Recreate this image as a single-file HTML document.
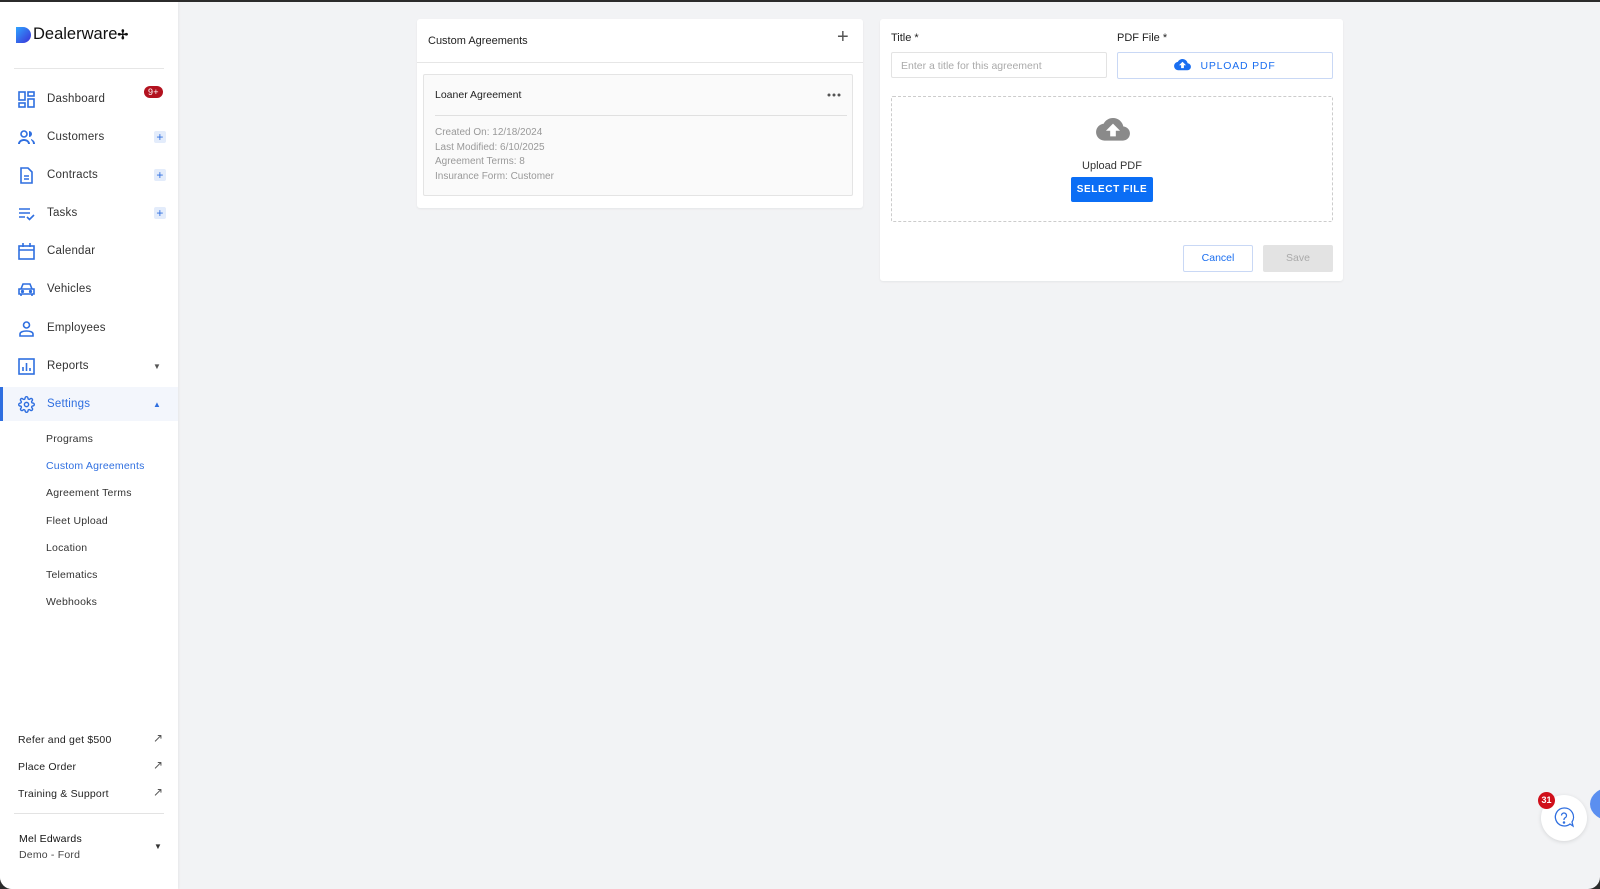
<!DOCTYPE html>
<html><head><meta charset="utf-8"><style>
*{box-sizing:border-box;margin:0;padding:0}
body{width:1600px;height:889px;overflow:hidden;background:#2b2b2b;font-family:"Liberation Sans",sans-serif;position:relative}
#app{position:absolute;left:0;top:2px;width:1600px;height:887px;background:#f2f3f5;border-radius:0 0 12px 12px;overflow:hidden}
.sb{position:absolute;left:0;top:0;width:178px;height:887px;background:#fff;box-shadow:1px 0 2px rgba(0,0,0,.05)}
.a{position:absolute}
.nav{position:absolute;left:0;width:178px;height:34px;display:flex;align-items:center;font-size:11.5px;color:#333;letter-spacing:.2px}
.nav .ic{position:absolute;left:18px;top:9px;width:17px;height:17px}
.nav .t{position:absolute;left:47px}
.plus{position:absolute;left:154px;top:11px;width:12px;height:12px;background:#e3ecfb;border-radius:2px;color:#2f6fe0;font-size:12px;line-height:12px;text-align:center}
.sub{position:absolute;left:46px;font-size:10.5px;color:#333;letter-spacing:.2px}
.lk{position:absolute;left:18px;font-size:10.5px;color:#222;letter-spacing:.2px}
.arr{position:absolute;left:153px;font-size:12px;color:#555}
.card{position:absolute;background:#fff;border-radius:3px;box-shadow:0 1px 2px rgba(0,0,0,.06)}
.gr{font-size:10px;color:#999;line-height:14.7px}
</style></head><body>
<div id="app">
<div class="sb">
  <div class="a" style="left:16px;top:23px;display:flex;align-items:center">
    <svg width="15" height="16" viewBox="0 0 15 16"><defs><linearGradient id="g" x1="0" y1="0" x2="1" y2="1"><stop offset="0" stop-color="#2fa4ff"/><stop offset="1" stop-color="#3b2fd6"/></linearGradient></defs><path d="M0 0h7a8 8 0 0 1 0 16H0z" fill="url(#g)"/></svg>
    <span style="font-size:16.5px;color:#111;margin-left:2px;letter-spacing:0px">Dealerware</span><span style="font-size:13px;color:#111;font-weight:bold">✢</span>
  </div>
  <div class="a" style="left:14px;top:66px;width:150px;height:1px;background:#e6e6e6"></div>

  <div class="nav" style="top:80px"><svg class="ic" viewBox="0 0 17 17" fill="none" stroke="#2f6fe0" stroke-width="1.6"><rect x="1" y="1" width="6" height="8"/><rect x="10" y="1" width="6" height="4"/><rect x="1" y="12" width="6" height="4"/><rect x="10" y="8" width="6" height="8"/></svg><span class="t">Dashboard</span>
    <div class="a" style="left:144px;top:4px;background:#b3121f;color:#fff;font-size:9px;border-radius:8px;padding:1px 4px">9+</div></div>
  <div class="nav" style="top:118px"><svg class="ic" viewBox="0 0 17 17" fill="#2f6fe0"><circle cx="6" cy="5" r="3" fill="none" stroke="#2f6fe0" stroke-width="1.6"/><path d="M0 15c0-3 3-5 6-5s6 2 6 5h-2c0-2-2-3-4-3s-4 1-4 3z"/><path d="M11 2a3 3 0 0 1 0 6z"/><path d="M13 10c2 1 4 2 4 5h-2c0-2-1-3-2-4z"/></svg><span class="t">Customers</span><div class="plus">+</div></div>
  <div class="nav" style="top:156px"><svg class="ic" viewBox="0 0 17 17" fill="none" stroke="#2f6fe0" stroke-width="1.6"><path d="M3 1h7l4 4v11H3z"/><path d="M6 9h5M6 12h5"/></svg><span class="t">Contracts</span><div class="plus">+</div></div>
  <div class="nav" style="top:194px"><svg class="ic" viewBox="0 0 17 17" fill="none" stroke="#2f6fe0" stroke-width="1.6"><path d="M1 4h11M1 8h11M1 12h6M9 12l2.5 2.5L16 10"/></svg><span class="t">Tasks</span><div class="plus">+</div></div>
  <div class="nav" style="top:232px"><svg class="ic" viewBox="0 0 17 17" fill="none" stroke="#2f6fe0" stroke-width="1.6"><rect x="1" y="3" width="15" height="13"/><path d="M1 7h15M5 0v4M12 0v4"/></svg><span class="t">Calendar</span></div>
  <div class="nav" style="top:270px"><svg class="ic" viewBox="0 0 17 17" fill="none" stroke="#2f6fe0" stroke-width="1.6"><path d="M3 8l2-5h7l2 5M1 8h15v5H1zM3 13v2M14 13v2"/><circle cx="4.5" cy="10.5" r=".8" fill="#2f6fe0"/><circle cx="12.5" cy="10.5" r=".8" fill="#2f6fe0"/></svg><span class="t">Vehicles</span></div>
  <div class="nav" style="top:309px"><svg class="ic" viewBox="0 0 17 17" fill="none" stroke="#2f6fe0" stroke-width="1.6"><circle cx="8.5" cy="5" r="3"/><path d="M2 16v-2c0-2 3-3 6.5-3s6.5 1 6.5 3v2z"/></svg><span class="t">Employees</span></div>
  <div class="nav" style="top:347px"><svg class="ic" viewBox="0 0 17 17" fill="none" stroke="#2f6fe0" stroke-width="1.6"><rect x="1" y="1" width="15" height="15"/><path d="M5 13V9M8.5 13V5M12 13v-3"/></svg><span class="t">Reports</span><span class="a" style="left:153px;font-size:8px;color:#555">▼</span></div>
  <div class="nav" style="top:385px;background:#f3f6fc;color:#2f6fe0"><div class="a" style="left:0;top:0;width:3px;height:34px;background:#2f6fe0"></div><svg class="ic" viewBox="0 0 24 24" fill="none" stroke="#2f6fe0" stroke-width="2"><circle cx="12" cy="12" r="3"/><path d="M19.4 15a1.7 1.7 0 0 0 .3 1.8l.1.1a2 2 0 1 1-2.8 2.8l-.1-.1a1.7 1.7 0 0 0-1.8-.3 1.7 1.7 0 0 0-1 1.5V21a2 2 0 1 1-4 0v-.1a1.7 1.7 0 0 0-1.1-1.5 1.7 1.7 0 0 0-1.8.3l-.1.1a2 2 0 1 1-2.8-2.8l.1-.1a1.7 1.7 0 0 0 .3-1.8 1.7 1.7 0 0 0-1.5-1H3a2 2 0 1 1 0-4h.1a1.7 1.7 0 0 0 1.5-1.1 1.7 1.7 0 0 0-.3-1.8l-.1-.1a2 2 0 1 1 2.8-2.8l.1.1a1.7 1.7 0 0 0 1.8.3H9a1.7 1.7 0 0 0 1-1.5V3a2 2 0 1 1 4 0v.1a1.7 1.7 0 0 0 1 1.5 1.7 1.7 0 0 0 1.8-.3l.1-.1a2 2 0 1 1 2.8 2.8l-.1.1a1.7 1.7 0 0 0-.3 1.8V9a1.7 1.7 0 0 0 1.5 1H21a2 2 0 1 1 0 4h-.1a1.7 1.7 0 0 0-1.5 1z"/></svg><span class="t">Settings</span><span class="a" style="left:153px;font-size:8px">▲</span></div>

  <div class="sub" style="top:431px">Programs</div>
  <div class="sub" style="top:458px;color:#2f6fe0">Custom Agreements</div>
  <div class="sub" style="top:485px">Agreement Terms</div>
  <div class="sub" style="top:513px">Fleet Upload</div>
  <div class="sub" style="top:540px">Location</div>
  <div class="sub" style="top:567px">Telematics</div>
  <div class="sub" style="top:594px">Webhooks</div>

  <div class="lk" style="top:732px">Refer and get $500</div><div class="arr" style="top:729px">↗</div>
  <div class="lk" style="top:759px">Place Order</div><div class="arr" style="top:756px">↗</div>
  <div class="lk" style="top:786px">Training &amp; Support</div><div class="arr" style="top:783px">↗</div>
  <div class="a" style="left:14px;top:811px;width:150px;height:1px;background:#e3e3e3"></div>
  <div class="lk" style="left:19px;top:831px;color:#111">Mel Edwards</div>
  <div class="lk" style="left:19px;top:847px;color:#444">Demo - Ford</div>
  <span class="a" style="left:154px;top:840px;font-size:8px;color:#333">▼</span>
</div>

<div class="card" style="left:417px;top:17px;width:446px;height:189px">
  <div class="a" style="left:11px;top:16px;font-size:11px;color:#222">Custom Agreements</div>
  <div class="a" style="left:420px;top:7px;font-size:20px;color:#555;font-weight:300">+</div>
  <div class="a" style="left:0;top:43px;width:446px;height:1px;background:#e6e6e6"></div>
  <div class="a" style="left:6px;top:55px;width:430px;height:122px;background:#fafafa;border:1px solid #e4e4e4;border-radius:2px">
    <div class="a" style="left:11px;top:14px;font-size:10.5px;color:#222">Loaner Agreement</div>
    <svg class="a" style="left:403px;top:18px" width="14" height="4" viewBox="0 0 14 4" fill="#555"><circle cx="2" cy="2" r="1.5"/><circle cx="7" cy="2" r="1.5"/><circle cx="12" cy="2" r="1.5"/></svg>
    <div class="a" style="left:11px;top:40px;width:412px;height:1px;background:#e0e0e0"></div>
    <div class="a gr" style="left:11px;top:51px">Created On: 12/18/2024<br>Last Modified: 6/10/2025<br>Agreement Terms: 8<br>Insurance Form: Customer</div>
  </div>
</div>

<div class="card" style="left:880px;top:17px;width:463px;height:262px">
  <div class="a" style="left:11px;top:13px;font-size:11px;color:#222">Title *</div>
  <div class="a" style="left:237px;top:13px;font-size:11px;color:#222">PDF File *</div>
  <div class="a" style="left:11px;top:33px;width:216px;height:26px;border:1px solid #e3e3e3;border-radius:2px;font-size:10.5px;color:#aaa;padding:7px 9px">Enter a title for this agreement</div>
  <div class="a" style="left:237px;top:33px;width:216px;height:27px;border:1px solid #c9d8f5;border-radius:2px;font-size:10.5px;color:#1a6ef0;letter-spacing:.8px;display:flex;align-items:center;justify-content:center">
    <svg width="17" height="14" viewBox="0 0 24 20" fill="#1a6ef0" style="margin-right:9px"><path d="M19.35 6.04C18.67 2.59 15.64 0 12 0 9.11 0 6.6 1.64 5.35 4.04 2.34 4.36 0 6.91 0 10c0 3.31 2.69 6 6 6h13c2.76 0 5-2.24 5-5 0-2.64-2.05-4.78-4.65-4.96zM14 9v4h-4V9H7l5-5 5 5h-3z"/></svg>UPLOAD PDF</div>
  <div class="a" style="left:11px;top:77px;width:442px;height:126px;border:1px dashed #ccc;border-radius:2px">
    <svg class="a" style="left:204px;top:21px" width="34" height="24" viewBox="0 0 24 17" fill="#8a8a8a"><path d="M19.35 6.04C18.67 2.59 15.64 0 12 0 9.11 0 6.6 1.64 5.35 4.04 2.34 4.36 0 6.91 0 10c0 3.31 2.69 6 6 6h13c2.76 0 5-2.24 5-5 0-2.64-2.05-4.78-4.65-4.96zM14 9v4h-4V9H7l5-5 5 5h-3z"/></svg>
    <div class="a" style="left:0;width:440px;top:63px;text-align:center;font-size:11px;color:#333">Upload PDF</div>
    <div class="a" style="left:179px;top:80px;width:82px;height:25px;background:#0b6ef5;border-radius:2px;color:#fff;font-size:10px;font-weight:bold;letter-spacing:.6px;text-align:center;line-height:25px">SELECT FILE</div>
  </div>
  <div class="a" style="left:303px;top:226px;width:70px;height:27px;border:1px solid #c9d8f5;border-radius:2px;color:#1a6ef0;font-size:10.5px;text-align:center;line-height:25px">Cancel</div>
  <div class="a" style="left:383px;top:226px;width:70px;height:27px;background:#e3e3e3;border-radius:2px;color:#aaa;font-size:10.5px;text-align:center;line-height:27px">Save</div>
</div>

<div class="a" style="left:1590px;top:785px;width:44px;height:34px;border-radius:50%;background:#5b8ff0"></div>
<div class="a" style="left:1541px;top:793px;width:46px;height:46px;border-radius:50%;background:#fff;box-shadow:0 1px 4px rgba(0,0,0,.12)">
  <svg class="a" style="left:12px;top:12px" width="22" height="22" viewBox="0 0 22 22" fill="none" stroke="#2f6fe0" stroke-width="1.3"><path d="M11 1a9 9 0 1 0 6 16l3 2-1-4A9 9 0 0 0 11 1z"/><path d="M8.5 8.5a2.5 2.5 0 1 1 3.5 2.3c-.7.4-1 .9-1 1.7v.5"/><circle cx="11" cy="15.5" r=".6" fill="#2f6fe0"/></svg>
</div>
<div class="a" style="left:1538px;top:790px;width:17px;height:17px;border-radius:50%;background:#d0101b;color:#fff;font-size:9px;font-weight:bold;text-align:center;line-height:17px">31</div>
</div>
</body></html>
